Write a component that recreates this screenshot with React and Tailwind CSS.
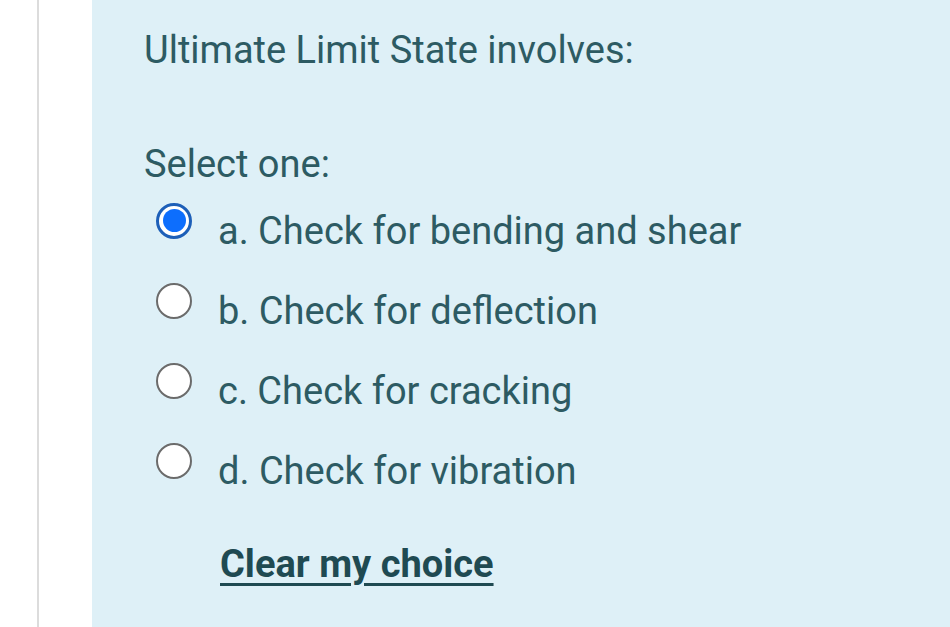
import React, { useState } from "react";

const options = [
  "a. Check for bending and shear",
  "b. Check for deflection",
  "c. Check for cracking",
  "d. Check for vibration",
];

function Radio({ checked }) {
  if (checked) {
    return (
      <span className="-mt-[21px] flex h-[36px] w-[36px] shrink-0 items-center justify-center rounded-full border-[3px] border-[#1d5fb8] bg-white">
        <span className="h-[23px] w-[23px] rounded-full bg-[#0d6efd]" />
      </span>
    );
  }
  return <span className="-mt-[21px] block h-[36px] w-[36px] shrink-0 rounded-full border-[2.5px] border-[#6b6b6b] bg-white" />;
}

export default function App() {
  const [choice, setChoice] = useState(0);

  return (
    <div className="flex h-[627px] w-[950px] overflow-hidden bg-white font-['Roboto',sans-serif]">
      <div className="ml-[37px] w-[2px] bg-[#dcdcdc]" />
      <div className="w-[53px]" />
      <div className="flex-1 bg-[#def0f7] pl-[52px] pt-[26px] text-[#2d5b63]">
        <h2 className="text-[38px] leading-[48px]">Ultimate Limit State involves:</h2>

        <p className="mt-[66px] text-[38px] leading-[48px]">Select one:</p>

        <div className="mt-[3px] flex flex-col">
          {options.map((label, i) => (
            <label
              key={label}
              onClick={() => setChoice(i)}
              className="flex h-[80px] cursor-pointer items-center gap-[26px] pl-[12px] text-[38px]"
            >
              <Radio checked={choice === i} />
              <span>{label}</span>
            </label>
          ))}
        </div>

        <button
          onClick={() => setChoice(null)}
          className="ml-[76px] mt-[25px] text-[38px] font-bold text-[#1f4a52] underline decoration-[3px] underline-offset-[6px]"
        >
          Clear my choice
        </button>
      </div>
    </div>
  );
}
